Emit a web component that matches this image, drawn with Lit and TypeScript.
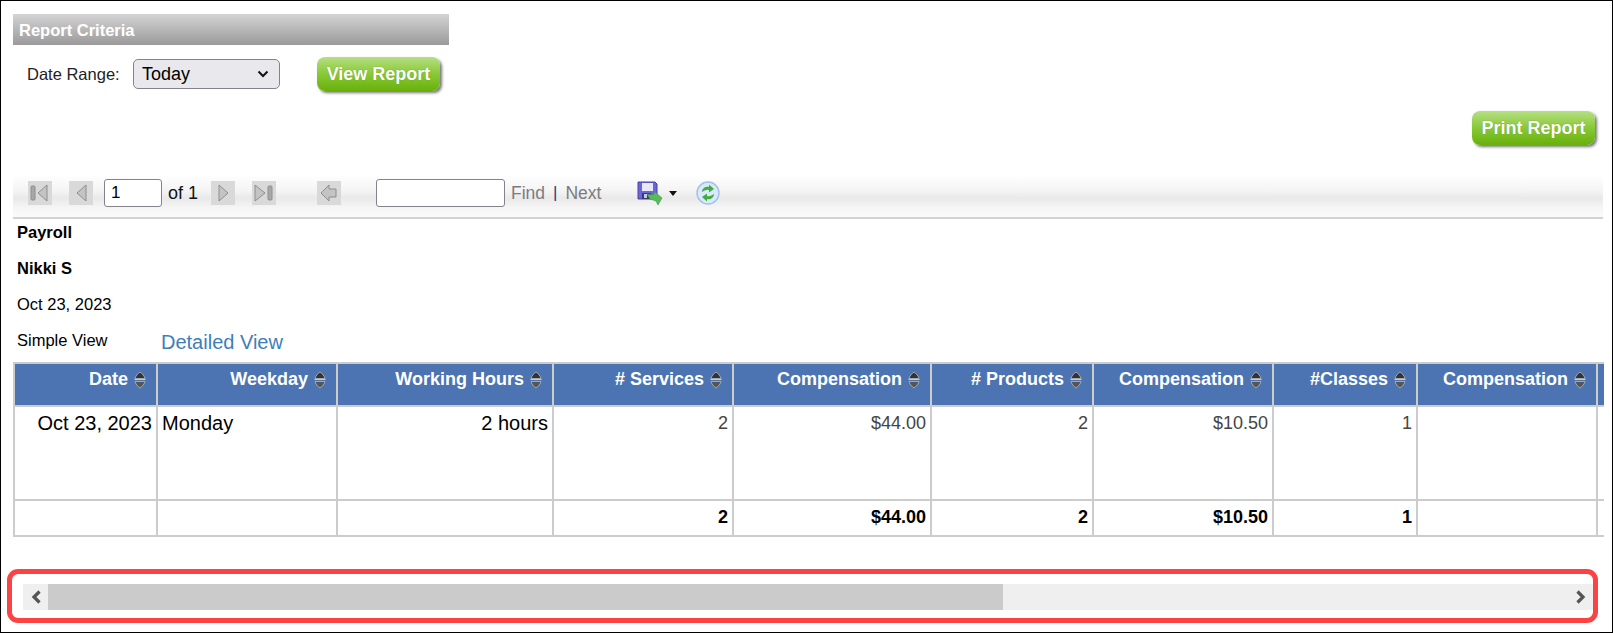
import { LitElement, html, css, svg } from "lit";
import { customElement } from "lit/decorators.js";

const cols = [
  { w: 143, h: "Date", a: "Oct 23, 2023", b: "", big: true },
  { w: 180, h: "Weekday", a: "Monday", b: "", big: true, left: true },
  { w: 216, h: "Working Hours", a: "2 hours", b: "", big: true },
  { w: 180, h: "# Services", a: "2", b: "2" },
  { w: 198, h: "Compensation", a: "$44.00", b: "$44.00" },
  { w: 162, h: "# Products", a: "2", b: "2" },
  { w: 180, h: "Compensation", a: "$10.50", b: "$10.50" },
  { w: 144, h: "#Classes", a: "1", b: "1" },
  { w: 180, h: "Compensation", a: "", b: "" },
  { w: 7, h: "", a: "", b: "" },
];

const sortIcon = html`<svg class="sort" viewBox="0 0 14 18" width="14" height="18">
  <path d="M2 7.500C2 6 5 2 7 1c2 1 5 5 5 6.500z" fill="#333" stroke="#a8a8a8" stroke-width="1"/>
  <path d="M1.500 8.500h11" stroke="#c9c9c9" stroke-width="1"/>
  <path d="M2 10.500h10C12 12 9 16 7 17c-2-1-5-5-5-6.500z" fill="#555" stroke="#a8a8a8" stroke-width="1"/>
</svg>`;

const navIcon = (d: unknown) => html`<span class="nav"><svg viewBox="0 0 24 24" width="24" height="24">${d}</svg></span>`;
const bar = (x: number) => svg`<rect x="${x}" y="5" width="4" height="14" rx="1" fill="#a8a8a8" stroke="#8e8e8e"/>`;
const tri = (d: string) => svg`<path d="${d}" fill="#c4c4c4" stroke="#8e8e8e" stroke-width="1"/>`;

@customElement("app-root")
export class AppRoot extends LitElement {
  static styles = css`
    :host { display: block; }
    .page {
      box-sizing: border-box; width: 1613px; height: 633px; background: #fff;
      border: 1px solid #000; padding: 13px 9px 0 12px; overflow: hidden;
      font-family: "Liberation Sans", Arial, sans-serif; color: #000;
    }
    .criteria {
      width: 436px; height: 31px; box-sizing: border-box; padding-left: 6px;
      background: linear-gradient(#d4d4d4, #9a9a9a); color: #fff; font-weight: bold;
      font-size: 16.5px; line-height: 33px;
    }
    .form { display: flex; align-items: center; height: 34px; margin-top: 12px; padding-left: 14px; }
    .form label { font-size: 16.5px; color: #222; width: 106px; }
    .select {
      box-sizing: border-box; width: 147px; height: 30px; border: 1px solid #85828f; border-radius: 5px;
      background: #e9e9ed; display: flex; align-items: center; justify-content: space-between;
      padding: 0 10px 0 8px; font-size: 18px; color: #000;
    }
    .btn {
      box-sizing: border-box; width: 123px; height: 34px; border-radius: 8px;
      background: linear-gradient(#b5df84, #8ccb3c 45%, #68b00a); color: #fff; font-weight: bold;
      font-size: 18px; text-align: center; line-height: 34px; white-space: nowrap;
      box-shadow: 2px 2px 3px #777; text-shadow: 0 0 1px #5c8f1d;
    }
    .form .btn { margin-left: 37px; }
    .print-row { display: flex; justify-content: flex-end; margin-top: 20px; padding-right: 8px; }
    .toolbar {
      display: flex; align-items: center; height: 36px; padding: 0 0 6px 15px; margin-top: 30px;
      border-bottom: 2px solid #d2d2d2; font-size: 17px;
      background: linear-gradient(#fff, #f3f3f3 40%, #e9e9e9 55%, #f6f6f6 80%, #fafafa);
    }
    .nav { width: 24px; height: 24px; background: #d9d9d9; display: block; flex: none; }
    .nav svg { display: block; }
    .tinput {
      box-sizing: border-box; height: 28px; border: 1px solid #85828f; border-radius: 3px; background: #fff;
      display: flex; align-items: center; padding-left: 6px; color: #000; flex: none; font-size: 17px;
    }
    .pg { width: 58px; margin-left: 11px; }
    .of { margin-left: 6px; width: 43px; color: #111; font-size: 18px; }
    .ml17 { margin-left: 17px; }
    .ml41 { margin-left: 41px; }
    .find { width: 129px; margin-left: 35px; }
    .link { color: #7c7c80; font-size: 17.5px; }
    .link.first { margin-left: 6px; }
    .sep { color: #1d3f7f; margin: 0 8px; font-size: 17px; }
    .save { margin-left: 36px; display: block; }
    .caret { width: 0; height: 0; border: 4px solid transparent; border-top: 5px solid #111; border-bottom: 0; margin-left: 6px; }
    .refresh { margin-left: 19px; display: block; }
    .info { font-size: 16.5px; padding: 0 0 0 4px; margin-top: -5px; }
    .info div { height: 36px; line-height: 36px; }
    .b { font-weight: bold; }
    .views { display: flex; align-items: center; }
    .views span:first-child { width: 144px; }
    .views .detail { color: #3d7ebb; font-size: 20px; padding-top: 3px; }
    table { border-collapse: collapse; table-layout: fixed; width: 1590px; margin-top: 4px; }
    th {
      background: #4c74b2; color: #fff; font-size: 18px; font-weight: bold; text-align: right;
      height: 43px; padding: 0 9px 10px 0; border: 2px solid #ccc; white-space: nowrap; box-sizing: border-box;
    }
    th span { display: inline-flex; align-items: center; gap: 5px; }
    th.last, td.last { border-right: 0; padding: 0; }
    td {
      border: 2px solid #ccc; text-align: right; vertical-align: top; padding: 6px 4px 0 3px;
      font-size: 18px; color: #444; box-sizing: border-box;
    }
    .row td { height: 94px; }
    td.big { font-size: 20px; color: #000; padding-top: 5px; }
    td.left { text-align: left; padding-left: 4px; }
    .total td { height: 36px; font-weight: bold; color: #000; font-size: 18px; vertical-align: middle; padding-top: 0; padding-bottom: 2px; }
    .sort { display: block; }
    .annot {
      box-sizing: border-box; width: 1591px; height: 54px; margin: 32px 0 0 -6px;
      border: 5px solid #fb4343; border-radius: 11px; padding: 10px 0 0 11px;
    }
    .track { height: 26px; background: #efefef; display: flex; align-items: center; justify-content: space-between; position: relative; }
    .arrow { width: 25px; height: 26px; display: flex; align-items: center; justify-content: center; }
    .thumb { position: absolute; left: 25px; top: 0; height: 26px; width: 955px; background: #cbcbcb; }
  `;

  render() {
    return html`<div class="page">
      <div class="criteria">Report Criteria</div>
      <div class="form">
        <label>Date Range:</label>
        <div class="select">Today
          <svg width="12" height="8" viewBox="0 0 12 8"><path d="M1.500 1.500 6 6l4.500-4.500" fill="none" stroke="#111" stroke-width="2"/></svg>
        </div>
        <div class="btn">View Report</div>
      </div>
      <div class="print-row"><div class="btn">Print Report</div></div>
      <div class="toolbar">
        ${navIcon(svg`${bar(3)}${tri("M19 4v16l-9-8z")}`)}
        <span class="ml17">${navIcon(svg`${tri("M17 4v16l-9-8z")}`)}</span>
        <div class="tinput pg">1</div>
        <div class="of">of 1</div>
        ${navIcon(svg`${tri("M8 4v16l9-8z")}`)}
        <span class="ml17">${navIcon(svg`${tri("M3 4v16l10-8z")}${bar(16)}`)}</span>
        <span class="ml41">${navIcon(svg`<path d="M4 12l8-8v4h7v8h-7v4z" fill="#c4c4c4" stroke="#8e8e8e"/>`)}</span>
        <div class="tinput find"></div>
        <span class="link first">Find</span><span class="sep">|</span><span class="link">Next</span>
        <svg class="save" width="26" height="24" viewBox="0 0 26 24">
          <path d="M1 1h17l2 2v15H1z" fill="#6a66d8" stroke="#4640a8"/>
          <rect x="5" y="2" width="11" height="8" fill="#e8e8f8"/>
          <rect x="5" y="12" width="9" height="6" fill="#3a3a70"/>
          <rect x="7" y="13" width="3" height="4" fill="#c8c8e0"/>
          <path d="M10 13l6 1 2-3 7 6-4 7-2-4-6-2z" fill="#5cb85c" stroke="#3d9a4a" stroke-width=".6"/>
        </svg>
        <div class="caret"></div>
        <svg class="refresh" width="24" height="24" viewBox="0 0 24 24">
          <circle cx="12" cy="12" r="11" fill="#dbe8fa" stroke="#9fc0ea" stroke-width="1.4"/>
          <path d="M6 11c0-4 4-6 7-5V3.500l5 4.500-5 3.500V9c-2-.5-4 0-7 2z" fill="#3fae3f"/>
          <path d="M18 13c0 4-4 6-7 5v2.500L6 16l5-3.500V15c2 .5 4 0 7-2z" fill="#3fae3f"/>
        </svg>
      </div>
      <div class="info">
        <div class="b">Payroll</div>
        <div class="b">Nikki S</div>
        <div>Oct 23, 2023</div>
        <div class="views"><span>Simple View</span><span class="detail">Detailed View</span></div>
      </div>
      <table>
        <colgroup>${cols.map((c) => html`<col style="width:${c.w}px" />`)}</colgroup>
        <tr>${cols.map((c) => html`<th class="${c.h ? "" : "last"}">${c.h ? html`<span>${c.h}${sortIcon}</span>` : ""}</th>`)}</tr>
        <tr class="row">${cols.map((c) => html`<td class="${c.big ? "big" : ""} ${c.left ? "left" : ""} ${c.h ? "" : "last"}">${c.a}</td>`)}</tr>
        <tr class="total">${cols.map((c) => html`<td class="${c.h ? "" : "last"}">${c.b}</td>`)}</tr>
      </table>
      <div class="annot">
        <div class="track">
          <div class="thumb"></div>
          <div class="arrow"><svg width="12" height="14" viewBox="0 0 12 14"><path d="M9.500 1.500 4 7l5.500 5.500" fill="none" stroke="#555" stroke-width="3.200"/></svg></div>
          <div class="arrow"><svg width="12" height="14" viewBox="0 0 12 14"><path d="M2.500 1.500 8 7l-5.500 5.500" fill="none" stroke="#555" stroke-width="3.200"/></svg></div>
        </div>
      </div>
    </div>`;
  }
}
